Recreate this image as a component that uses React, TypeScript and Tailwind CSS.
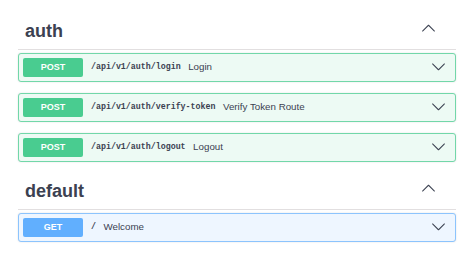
import React from "react";

type Op = { method: "POST" | "GET"; path: string; summary: string };

const sections: { tag: string; ops: Op[] }[] = [
  {
    tag: "auth",
    ops: [
      { method: "POST", path: "/api/v1/auth/login", summary: "Login" },
      { method: "POST", path: "/api/v1/auth/verify-token", summary: "Verify Token Route" },
      { method: "POST", path: "/api/v1/auth/logout", summary: "Logout" },
    ],
  },
  {
    tag: "default",
    ops: [{ method: "GET", path: "/", summary: "Welcome" }],
  },
];

// swagger-ui arrow
const Arrow = ({ up, className }: { up?: boolean; className?: string }) => (
  <svg
    width="15"
    height="15"
    viewBox="0 0 20 20"
    className={className}
    style={up ? { transform: "rotate(180deg)" } : undefined}
  >
    <path
      fill="#3b4151"
      d="M17.418 6.109c.272-.268.709-.268.979 0s.271.701 0 .969l-7.908 7.83c-.27.268-.707.268-.979 0l-7.908-7.83c-.27-.268-.27-.701 0-.969.271-.268.709-.268.979 0L10 13.25l7.418-7.141z"
    />
  </svg>
);

function OpBlock({ op }: { op: Op }) {
  const post = op.method === "POST";
  return (
    <div
      className={
        "mb-[11px] flex items-center rounded-[3px] border p-[4px] shadow-[0_0_2px_rgba(0,0,0,0.12)] " +
        (post ? "border-[#72d7a9] bg-[#edfaf4]" : "border-[#8cc4fd] bg-[#eef6ff]")
      }
    >
      <span
        className={
          "flex h-[19px] w-[60px] shrink-0 items-center justify-center rounded-[2px] text-[9px] font-bold text-white " +
          (post ? "bg-[#49cc90]" : "bg-[#61affe]")
        }
      >
        {op.method}
      </span>
      <span className="ml-[8px] font-['Liberation_Mono',monospace] text-[8.3px] font-bold text-[#3b4151]">
        {op.path}
      </span>
      <span className="ml-[7.5px] text-[9.75px] text-[#3b4151]">{op.summary}</span>
      <Arrow className="mb-[3px] ml-auto mr-[5px]" />
    </div>
  );
}

export default function App() {
  return (
    <div className="h-[272px] w-[474px] overflow-hidden bg-white px-[18px] pt-[13px] font-['Liberation_Sans',Arial,sans-serif]">
      {sections.map((s) => (
        <div key={s.tag}>
          <div className="flex items-center border-b border-[#e2dfe0] py-[6px] pl-[7px] pr-[20px]">
            <h3 className="text-[18px] font-bold leading-[24px] text-[#3b4151]">{s.tag}</h3>
            <Arrow up className="mb-[6px] ml-auto" />
          </div>
          <div className="mt-[3px]">
            {s.ops.map((op) => (
              <OpBlock key={op.path} op={op} />
            ))}
          </div>
        </div>
      ))}
    </div>
  );
}
